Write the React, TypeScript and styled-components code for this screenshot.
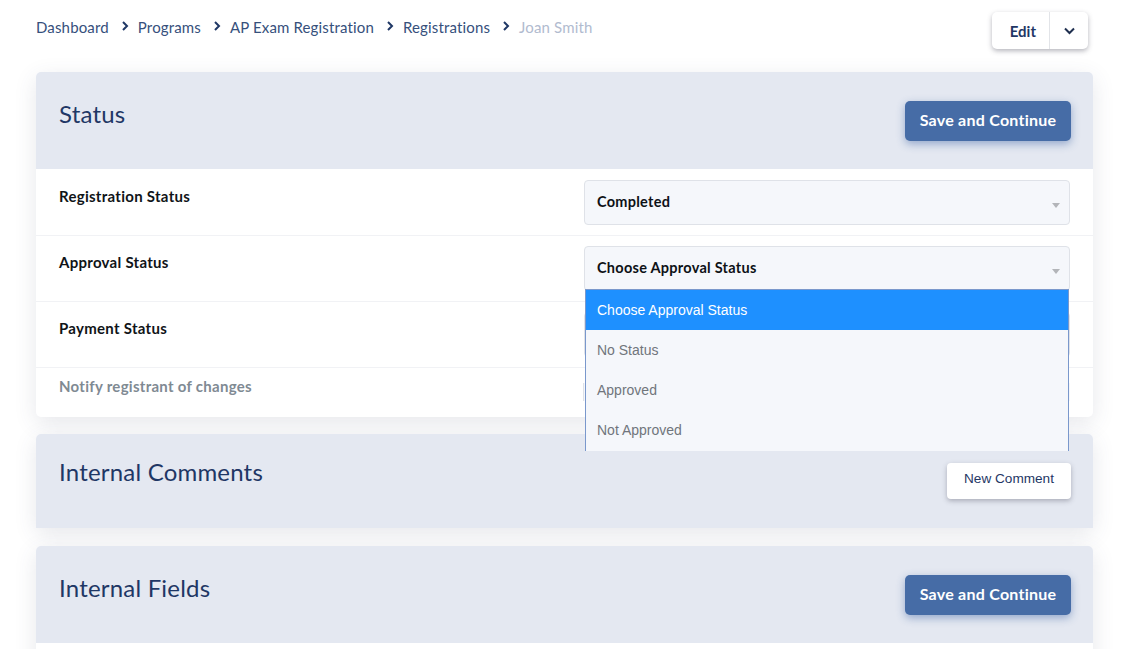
import React from 'react';
import styled, { createGlobalStyle } from 'styled-components';

const GlobalStyle = createGlobalStyle`
  html, body {
    margin: 0;
    padding: 0;
    height: 100%;
    overflow: hidden;
    background: #fff;
  }
  body {
    font-family: Lato, "Liberation Sans", sans-serif;
    color: #1f3765;
  }
`;

const Page = styled.div`
  width: 1057px;
  margin-left: 36px;
`;

const TopBar = styled.div`
  height: 72px;
  display: flex;
  justify-content: space-between;
  align-items: flex-start;
`;

const Breadcrumbs = styled.nav`
  display: flex;
  align-items: center;
  height: 20px;
  margin-top: 17px;
  font-size: 15px;
  letter-spacing: 0.15px;
`;

const Crumb = styled.span<{ $current?: boolean }>`
  color: ${(p) => (p.$current ? '#b1bbcf' : '#36507c')};
  white-space: nowrap;
`;

const CrumbSep = styled.svg`
  width: 8px;
  height: 10px;
  margin: -2px 9px 0 12px;
  fill: none;
  stroke: #1f3765;
  stroke-width: 2;
`;

const EditGroup = styled.div`
  display: flex;
  align-items: stretch;
  width: 96px;
  height: 37px;
  margin: 12px 5px 0 0;
  background: #fff;
  border-radius: 5px;
  box-shadow: 0 2px 5px rgba(60, 60, 80, 0.38);
`;

const EditLabel = styled.div`
  width: 58px;
  border-right: 1px solid #e2e4e8;
  display: flex;
  align-items: center;
  justify-content: flex-end;
  padding-right: 13px;
  box-sizing: border-box;
  font-size: 15px;
  font-weight: 700;
  color: #1f3765;
`;

const EditCaret = styled.div`
  flex: 1;
  display: flex;
  align-items: center;
  justify-content: center;
  svg {
    width: 11px;
    height: 8px;
    fill: none;
    stroke: #1f2f4f;
    stroke-width: 2;
  }
`;

const Card = styled.section<{ $gap?: number }>`
  background: #fff;
  border-radius: 5px;
  box-shadow: 0 6px 22px rgba(60, 70, 100, 0.13);
  margin-bottom: ${(p) => p.$gap ?? 17}px;
`;

const CardHeader = styled.header<{ $height?: number }>`
  height: ${(p) => p.$height ?? 97}px;
  box-sizing: border-box;
  background: #e4e8f1;
  border-radius: 5px 5px 0 0;
  padding: 0 22px 0 23px;
  display: flex;
  justify-content: space-between;
  align-items: flex-start;
`;

const CardTitle = styled.h2<{ $top?: number }>`
  margin: ${(p) => p.$top ?? 27}px 0 0;
  font-size: 24px;
  line-height: 30px;
  font-weight: 400;
  letter-spacing: 0.2px;
  color: #1f3765;
`;

const PrimaryButton = styled.button`
  width: 166px;
  height: 40px;
  margin-top: 29px;
  border: 0;
  border-radius: 5px;
  background: #466ca6;
  color: #fff;
  font-family: inherit;
  font-size: 16px;
  font-weight: 700;
  letter-spacing: 0.25px;
  padding: 0 0 4px;
  box-shadow: 0 3px 8px rgba(50, 90, 160, 0.45);
`;

const SecondaryButton = styled.button`
  width: 124px;
  height: 36px;
  margin-top: 29px;
  border: 0;
  border-radius: 4px;
  background: #fff;
  color: #1f3765;
  font-family: "Liberation Sans", sans-serif;
  font-size: 13.6px;
  box-shadow: 0 2px 5px rgba(60, 60, 80, 0.35);
  padding: 0 0 6px;
`;

const Row = styled.div<{ $height?: number; $top?: number; $last?: boolean }>`
  height: ${(p) => p.$height ?? 66}px;
  box-sizing: border-box;
  padding: ${(p) => p.$top ?? 10}px 23px 0;
  display: flex;
  justify-content: space-between;
  align-items: flex-start;
  border-bottom: ${(p) => (p.$last ? '0' : '1px solid #f1f2f5')};
`;

const RowLabel = styled.div<{ $muted?: boolean }>`
  margin-top: 7px;
  font-size: 15px;
  line-height: 18px;
  font-weight: 700;
  letter-spacing: 0.28px;
  color: ${(p) => (p.$muted ? '#7f8a93' : '#101418')};
`;

const SelectWrap = styled.div`
  position: relative;
  width: 486px;
`;

const SelectBox = styled.div`
  height: 45px;
  box-sizing: border-box;
  background: #f5f7fb;
  border: 1px solid #dfe2e8;
  border-radius: 4px;
  padding: 0 12px 2px;
  display: flex;
  align-items: center;
  justify-content: space-between;
  font-size: 14.5px;
  font-weight: 700;
  letter-spacing: 0.27px;
  color: #0d1116;
`;

const SelectArrow = styled.span`
  width: 0;
  height: 0;
  margin: 7px -3px 0 0;
  border-left: 4px solid transparent;
  border-right: 4px solid transparent;
  border-top: 5px solid #b3b5b9;
`;

const DropdownList = styled.ul`
  position: absolute;
  top: 43px;
  left: 1px;
  width: 484px;
  height: 162px;
  overflow: hidden;
  box-sizing: border-box;
  margin: 0;
  padding: 0;
  list-style: none;
  background: #f5f7fb;
  border: 1px solid #7a98cc;
  border-bottom: 0;
  z-index: 2;
`;

const DropdownItem = styled.li<{ $active?: boolean }>`
  height: 40px;
  line-height: 40px;
  padding-left: 11px;
  font-family: "Liberation Sans", sans-serif;
  font-size: 14px;
  background: ${(p) => (p.$active ? '#1e90ff' : 'transparent')};
  color: ${(p) => (p.$active ? '#fff' : '#70757c')};
`;

const NotifyBox = styled.div`
  width: 486px;
  height: 18px;
  margin-top: 13px;
  background: #f5f7fb;
  border-left: 1px solid #dfe2e8;
`;

const Chevron = () => (
  <CrumbSep viewBox="0 0 8 10">
    <path d="M2 1l4 4-4 4" />
  </CrumbSep>
);

const crumbs = ['Dashboard', 'Programs', 'AP Exam Registration', 'Registrations'];
const options = ['Choose Approval Status', 'No Status', 'Approved', 'Not Approved'];

export default function App() {
  return (
    <Page>
      <GlobalStyle />
      <TopBar>
        <Breadcrumbs>
          {crumbs.map((c) => (
            <React.Fragment key={c}>
              <Crumb>{c}</Crumb>
              <Chevron />
            </React.Fragment>
          ))}
          <Crumb $current>Joan Smith</Crumb>
        </Breadcrumbs>
        <EditGroup>
          <EditLabel>Edit</EditLabel>
          <EditCaret>
            <svg viewBox="0 0 11 8">
              <path d="M1 1.5l4.5 4.5L10 1.5" />
            </svg>
          </EditCaret>
        </EditGroup>
      </TopBar>

      <Card>
        <CardHeader>
          <CardTitle>Status</CardTitle>
          <PrimaryButton>Save and Continue</PrimaryButton>
        </CardHeader>
        <Row $height={67} $top={11}>
          <RowLabel>Registration Status</RowLabel>
          <SelectWrap>
            <SelectBox>
              Completed
              <SelectArrow />
            </SelectBox>
          </SelectWrap>
        </Row>
        <Row>
          <RowLabel>Approval Status</RowLabel>
          <SelectWrap>
            <SelectBox>
              Choose Approval Status
              <SelectArrow />
            </SelectBox>
            <DropdownList>
              {options.map((o, i) => (
                <DropdownItem key={o} $active={i === 0}>
                  {o}
                </DropdownItem>
              ))}
            </DropdownList>
          </SelectWrap>
        </Row>
        <Row>
          <RowLabel>Payment Status</RowLabel>
          <SelectWrap>
            <SelectBox />
          </SelectWrap>
        </Row>
        <Row $height={49} $top={2} $last>
          <RowLabel $muted>Notify registrant of changes</RowLabel>
          <NotifyBox />
        </Row>
      </Card>

      <Card $gap={18}>
        <CardHeader $height={94}>
          <CardTitle $top={23}>Internal Comments</CardTitle>
          <SecondaryButton>New Comment</SecondaryButton>
        </CardHeader>
      </Card>

      <Card>
        <CardHeader>
          <CardTitle>Internal Fields</CardTitle>
          <PrimaryButton>Save and Continue</PrimaryButton>
        </CardHeader>
        <Row />
      </Card>
    </Page>
  );
}
